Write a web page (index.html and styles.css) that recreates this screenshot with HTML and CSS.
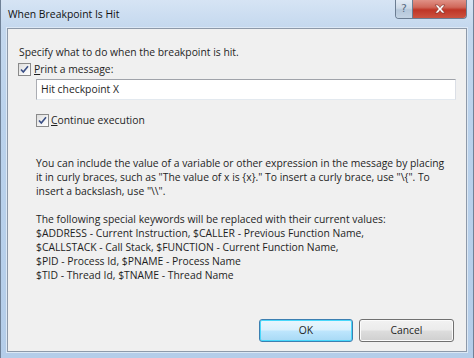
FILE: index.html
```html
<!DOCTYPE html>
<html>
<head>
<meta charset="utf-8">
<link rel="stylesheet" href="styles.css">
</head>
<body>
<div class="window">
  <div class="titlebar">
    <div class="title">When Breakpoint Is Hit</div>
    <div class="controls">
      <div class="btn-help">?</div>
      <div class="btn-close">
        <svg width="14" height="10" viewBox="0 0 14 10"><path d="M2 1 L5 1 L7 3.5 L9 1 L12 1 L8.6 5 L12 9 L9 9 L7 6.5 L5 9 L2 9 L5.4 5 Z" fill="#ffffff" stroke="#7a2a22" stroke-width="0.6"/></svg>
      </div>
    </div>
  </div>
  <div class="panel">
    <div class="intro">Specify what to do when the breakpoint is hit.</div>
    <div class="check-row first">
      <span class="checkbox"><svg width="11" height="11" viewBox="0 0 11 11"><path d="M2 5.5 L4.3 8 L9 2.2" fill="none" stroke="#3a4f86" stroke-width="1.6"/></svg></span>
      <span class="label"><u>P</u>rint a message:</span>
    </div>
    <div class="indent">
      <div class="textbox">Hit checkpoint X</div>
      <div class="check-row second">
        <span class="checkbox"><svg width="11" height="11" viewBox="0 0 11 11"><path d="M2 5.5 L4.3 8 L9 2.2" fill="none" stroke="#3a4f86" stroke-width="1.6"/></svg></span>
        <span class="label"><u>C</u>ontinue execution</span>
      </div>
      <p class="para">You can include the value of a variable or other expression in the message by placing<br>it in curly braces, such as "The value of x is {x}." To insert a curly brace, use "\{". To<br>insert a backslash, use "\\".</p>
      <p class="para">The following special keywords will be replaced with their current values:<br>$ADDRESS - Current Instruction, $CALLER - Previous Function Name,<br>$CALLSTACK - Call Stack, $FUNCTION - Current Function Name,<br>$PID - Process Id, $PNAME - Process Name<br>$TID - Thread Id, $TNAME - Thread Name</p>
    </div>
    <div class="buttons">
      <div class="button default">OK</div>
      <div class="button">Cancel</div>
    </div>
  </div>
</div>
</body>
</html>
```

FILE: styles.css
```css
html, body {
  margin: 0;
  padding: 0;
}
body {
  width: 474px;
  height: 358px;
  overflow: hidden;
  font-family: "Open Sans", "Noto Sans", sans-serif;
  font-size: 10.35px;
  color: #1e1e1e;
}
.window {
  box-sizing: border-box;
  width: 474px;
  height: 358px;
  display: flex;
  flex-direction: column;
  background: linear-gradient(180deg, #d6e4f4 0px, #c4d8ee 28px, #bad2ec 120px, #b4cde9 358px);
  border-left: 1px solid #6f8197;
  border-right: 1px solid #6f8197;
  padding: 0 6px 6px 6px;
}
.titlebar {
  height: 28px;
  flex: none;
  display: flex;
  justify-content: space-between;
  align-items: flex-start;
}
.title {
  margin-top: 6px;
  margin-left: 1px;
  font-size: 10.4px;
  line-height: 16px;
  color: #111;
}
.controls {
  display: flex;
  height: 18px;
  border: 1px solid #6b7d92;
  border-top: none;
  border-radius: 0 0 4px 4px;
  overflow: hidden;
}
.btn-help {
  width: 16px;
  height: 18px;
  background: linear-gradient(180deg, #e2ebf5 0%, #cdd9e6 45%, #b5c7da 55%, #c3d3e3 100%);
  border-right: 1px solid #6b7d92;
  color: #5a6d84;
  font-family: "DejaVu Sans", sans-serif;
  font-size: 11px;
  line-height: 18px;
  text-align: center;
}
.btn-close {
  width: 53px;
  height: 18px;
  background: linear-gradient(180deg, #e09186 0%, #d0685a 40%, #bf3526 55%, #cc5340 100%);
  display: flex;
  align-items: center;
  justify-content: center;
}
.panel {
  flex: 1;
  display: flex;
  flex-direction: column;
  background: #f0f0f0;
  border: 1px solid #8d99a9;
  box-shadow: 0 0 0 1px #dce8f5;
}
.intro {
  margin: 16px 0 0 11px;
  line-height: 14px;
  height: 14px;
}
.check-row {
  display: flex;
  align-items: center;
  height: 14px;
  line-height: 14px;
}
.check-row.first {
  margin: 3px 0 0 10px;
}
.check-row.second {
  margin-top: 13px;
}
.checkbox {
  box-sizing: border-box;
  width: 13px;
  height: 13px;
  border: 1px solid #8a8a8a;
  background: linear-gradient(135deg, #dcdcdc 0%, #f4f4f4 60%, #ffffff 100%);
  display: flex;
  align-items: center;
  justify-content: center;
  flex: none;
}
.first .label {
  margin-left: 3px;
}
.second .label {
  margin-left: 2px;
}
.indent {
  margin-left: 28px;
  display: flex;
  flex-direction: column;
}
.textbox {
  box-sizing: border-box;
  width: 420px;
  height: 21px;
  margin-top: 3px;
  background: #ffffff;
  border: 1px solid #abadb3;
  border-top-color: #a0a3aa;
  border-bottom-color: #e3e9ef;
  border-right-color: #dbdfe6;
  padding-left: 4px;
  line-height: 19px;
}
.para {
  margin: 29px 0 0 0;
  line-height: 14px;
  white-space: nowrap;
}
.para + .para {
  margin-top: 14px;
}
.buttons {
  margin-top: auto;
  margin-bottom: 9px;
  margin-right: 12px;
  display: flex;
  justify-content: flex-end;
  gap: 6px;
}
.button {
  box-sizing: border-box;
  width: 95px;
  height: 23px;
  border: 1px solid #707070;
  border-radius: 3px;
  background: linear-gradient(180deg, #f2f2f2 0%, #ebebeb 48%, #dddddd 52%, #cfcfcf 100%);
  box-shadow: inset 0 0 0 1px #fbfbfb;
  text-align: center;
  line-height: 21px;
}
.button.default {
  width: 94px;
  border-color: #3c7fb1;
  background: linear-gradient(180deg, #eaf6fd 0%, #d9f0fc 48%, #bee6fd 52%, #a7d9f5 100%);
  box-shadow: inset 0 0 0 1px #48d8fb;
}
```
